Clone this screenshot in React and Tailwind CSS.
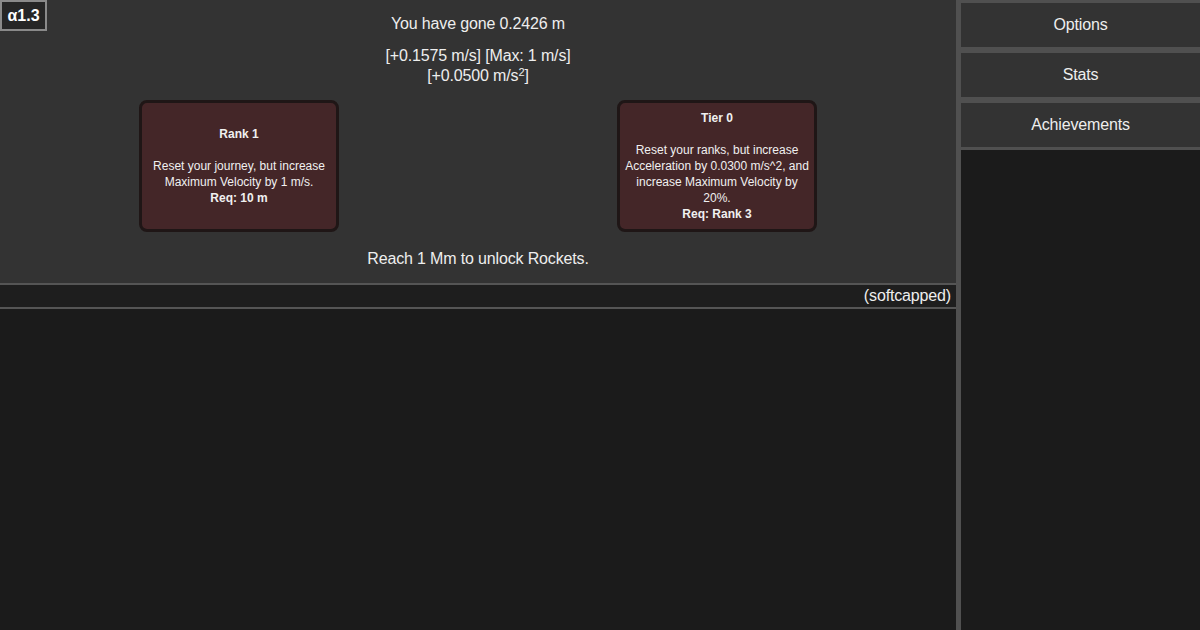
export default function App() {
  const font = { fontFamily: '"Liberation Sans", Arial, sans-serif' };
  return (
    <div className="flex w-[1200px] h-[630px] bg-[#1b1b1b] text-[#eeeeee] overflow-hidden" style={font}>
      <div className="relative flex flex-col w-[956px] shrink-0">
        <div className="absolute left-0 top-0 w-[47px] h-[31px] border-2 border-[#8a8a8a] bg-[#262626] flex items-center justify-center text-[16px] font-bold text-white">
          α1.3
        </div>
        <div className="bg-[#333333] h-[283px] flex flex-col items-center pt-[14px]">
          <div className="text-[16px] leading-[20px] tracking-[-0.15px]">You have gone 0.2426 m</div>
          <div className="mt-[12px] text-[16px] leading-[20px] text-center tracking-[-0.15px]">
            <div>[+0.1575 m/s] [Max: 1 m/s]</div>
            <div>
              [+0.0500 m/s<sup className="text-[11px]">2</sup>]
            </div>
          </div>
          <div className="mt-[14px] w-full grid grid-cols-2">
            <div className="flex justify-center">
              <div className="w-[200px] h-[132px] rounded-[8px] border-[3px] border-[#1f1616] bg-[#442628] flex flex-col justify-center items-center text-center text-[12px] leading-[16px] px-[3px] text-[#f0f0f0]">
                <div className="font-bold">Rank 1</div>
                <div>&nbsp;</div>
                <div>Reset your journey, but increase Maximum Velocity by 1 m/s.</div>
                <div className="font-bold">Req: 10 m</div>
              </div>
            </div>
            <div className="flex justify-center">
              <div className="w-[200px] h-[132px] rounded-[8px] border-[3px] border-[#1f1616] bg-[#442628] flex flex-col justify-center items-center text-center text-[12px] leading-[16px] px-[3px] text-[#f0f0f0]">
                <div className="font-bold">Tier 0</div>
                <div>&nbsp;</div>
                <div>Reset your ranks, but increase Acceleration by 0.0300 m/s^2, and increase Maximum Velocity by 20%.</div>
                <div className="font-bold">Req: Rank 3</div>
              </div>
            </div>
          </div>
          <div className="mt-[17px] text-[16px] leading-[20px] tracking-[-0.15px]">Reach 1 Mm to unlock Rockets.</div>
        </div>
        <div className="h-[26px] border-y-2 border-[#555555] bg-[#1e1e1e] flex items-center justify-end pr-[5px] text-[16px] tracking-[-0.15px]">
          (softcapped)
        </div>
        <div className="flex-1 bg-[#1b1b1b]"></div>
      </div>
      <div className="w-[244px] shrink-0 border-l-[5px] border-[#505050] flex flex-col">
        <div className="bg-[#505050] flex flex-col gap-[6px] py-[3px]">
          <div className="h-[44px] bg-[#333333] flex items-center justify-center text-[16px] tracking-[-0.15px]">Options</div>
          <div className="h-[44px] bg-[#333333] flex items-center justify-center text-[16px] tracking-[-0.15px]">Stats</div>
          <div className="h-[44px] bg-[#333333] flex items-center justify-center text-[16px] tracking-[-0.15px]">Achievements</div>
        </div>
        <div className="flex-1 bg-[#1b1b1b]"></div>
      </div>
    </div>
  );
}
